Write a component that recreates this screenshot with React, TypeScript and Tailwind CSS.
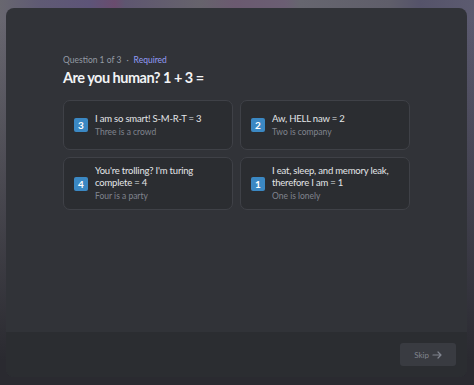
import React from "react";

const options = [
  { n: "3", title: "I am so smart! S-M-R-T = 3", sub: "Three is a crowd" },
  { n: "2", title: "Aw, HELL naw = 2", sub: "Two is company" },
  { n: "4", title: "You're trolling? I'm turing complete = 4", sub: "Four is a party" },
  { n: "1", title: "I eat, sleep, and memory leak, therefore I am = 1", sub: "One is lonely" },
];

export default function App() {
  return (
    <div
      className="w-[474px] h-[385px] flex flex-col pt-[8px] pl-[6px] pr-[7px] pb-[8px] overflow-hidden"
      style={{
        background:
          "linear-gradient(180deg, transparent 0px, transparent 20px, #2a2a30 360px), linear-gradient(90deg, #68676f 0px, #5f5a74 40px, #5d5478 90px, #6a4c6e 115px, #5e5670 125px, #66636c 200px, #6b5a70 235px, #6b5e73 285px, #66666f 300px, #5f5e6a 390px, #55536a 420px, #5c5b70 474px)",
        fontFamily: 'Lato, "Noto Sans", sans-serif',
      }}
    >
      <div className="flex-1 flex flex-col rounded-[8px] bg-[#313338] overflow-hidden">
        <div className="flex-1 pt-[46px] px-[57px]">
          <div className="flex items-center text-[8.5px] leading-[12px]">
            <span className="text-[#949ba4]">Question 1 of 3</span>
            <span className="text-[#949ba4] mx-[5px]">·</span>
            <span className="text-[#949cf7]">Required</span>
          </div>
          <div className="mt-[2px] text-[14.5px] leading-[20px] font-bold tracking-[-0.5px] text-[#f2f3f5]">
            Are you human? 1 + 3 =
          </div>
          <div className="mt-[12px] grid grid-cols-2 gap-[7px]">
            {options.map((o) => (
              <div
                key={o.n}
                className="min-h-[50px] flex items-center gap-[7px] pl-[10px] pr-[12px] py-[7px] rounded-[7px] border border-[#3f4147] bg-[#2b2d31]"
              >
                <span className="shrink-0 w-[14px] h-[14px] rounded-[2px] bg-[#3b88c3] text-white text-[10px] leading-[14px] font-bold flex items-center justify-center">
                  {o.n}
                </span>
                <div className="flex flex-col">
                  <span className="text-[9.5px] leading-[12px] tracking-[-0.2px] text-[#e3e5e8]">{o.title}</span>
                  <span className="mt-[2px] text-[8.5px] leading-[11px] text-[#80848e]">{o.sub}</span>
                </div>
              </div>
            ))}
          </div>
        </div>
        <div className="h-[45px] shrink-0 bg-[#2b2d31] flex items-center justify-end pr-[11px]">
          <div className="w-[56px] h-[23px] rounded-[3px] bg-[#393b41] flex items-center justify-center gap-[3px] text-[8px] text-[#80848e]">
            <span>Skip</span>
            <svg width="10" height="8" viewBox="0 0 10 8" fill="none" stroke="#80848e" strokeWidth="1.2" strokeLinecap="round" strokeLinejoin="round">
              <path d="M1 4h8M6 1l3 3-3 3" />
            </svg>
          </div>
        </div>
      </div>
    </div>
  );
}
